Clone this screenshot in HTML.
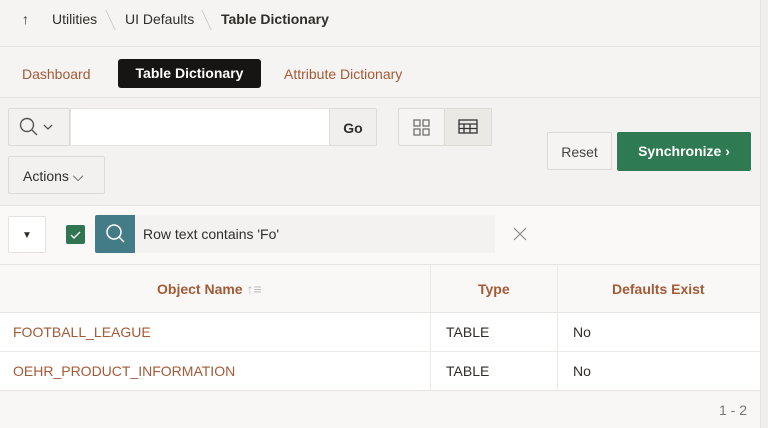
<!DOCTYPE html>
<html><head><meta charset="utf-8"><style>
*{box-sizing:border-box;margin:0;padding:0}
body{width:768px;height:428px;overflow:hidden;background:#f5f4f2;font-family:"Liberation Sans",sans-serif;position:relative;color:#312d2a}
.a{position:absolute}
.bc{font-size:14px;color:#312d2a;top:11px}
.tab{font-size:14px;color:#a35a36;top:66px}
.btn{position:absolute;border:1px solid #dddad6;background:#f1efed;border-radius:2px}
.hd{font-size:14px;font-weight:bold;color:#a35a36;top:281px}
.cell{font-size:14px;top:0}
</style></head><body>
<!-- breadcrumb -->
<div class="a" style="left:0;top:0;width:768px;height:47px;background:#f5f4f2;border-bottom:1px solid #e8e6e3"></div>
<div class="a bc" style="left:22px;font-weight:bold">↑</div>
<div class="a bc" style="left:52px">Utilities</div>
<div class="a" style="left:110px;top:9px;width:1px;height:22px;background:#ccc;transform:rotate(-25deg)"></div>
<div class="a bc" style="left:125px">UI Defaults</div>
<div class="a" style="left:206px;top:9px;width:1px;height:22px;background:#ccc;transform:rotate(-25deg)"></div>
<div class="a bc" style="left:221px;font-weight:bold">Table Dictionary</div>
<!-- tabs -->
<div class="a" style="left:0;top:97px;width:768px;height:1px;background:#e8e6e3"></div>
<div class="a tab" style="left:22px">Dashboard</div>
<div class="a" style="left:118px;top:59px;width:143px;height:29px;background:#161513;border-radius:3px;color:#fff;font-weight:bold;font-size:14px;text-align:center;line-height:29px">Table Dictionary</div>
<div class="a tab" style="left:284px">Attribute Dictionary</div>
<!-- toolbar -->
<div class="a" style="left:0;top:98px;width:760px;height:107px;background:#f3f2f0"></div>
<div class="btn" style="left:8px;top:108px;width:62px;height:38px;background:#f3f1ef"></div>
<svg class="a" style="left:18px;top:117px" width="40" height="20"><circle cx="9" cy="8" r="6.5" fill="none" stroke="#555" stroke-width="1.4"/><path d="M14 13l5 5" stroke="#555" stroke-width="1.4"/><path d="M26 8l4 4 4-4" fill="none" stroke="#555" stroke-width="1.3"/></svg>
<div class="a" style="left:70px;top:108px;width:260px;height:38px;background:#fff;border:1px solid #e4e2df"></div>
<div class="btn" style="left:329px;top:108px;width:48px;height:38px;font-weight:bold;font-size:14px;text-align:center;line-height:38px">Go</div>
<div class="btn" style="left:398px;top:108px;width:47px;height:38px;background:#f5f4f2"></div>
<svg class="a" style="left:413px;top:119px" width="18" height="18"><g fill="none" stroke="#666" stroke-width="1.2"><rect x="1" y="1" width="6" height="6"/><rect x="10" y="1" width="6" height="6"/><rect x="1" y="10" width="6" height="6"/><rect x="10" y="10" width="6" height="6"/></g></svg>
<div class="btn" style="left:444px;top:108px;width:48px;height:38px;background:#ebe9e6"></div>
<svg class="a" style="left:458px;top:119px" width="20" height="16"><g fill="none" stroke="#333" stroke-width="1.3"><rect x="1" y="1" width="18" height="13"/><path d="M1 5h18M1 9.5h18M6 5v9M12 5v9"/></g></svg>
<div class="btn" style="left:547px;top:132px;width:65px;height:38px;background:#f5f4f2;font-size:14px;text-align:center;line-height:38px;color:#444">Reset</div>
<div class="a" style="left:617px;top:132px;width:134px;height:39px;background:#2e7a52;border-radius:2px;color:#fff;font-weight:bold;font-size:14px;text-align:center;line-height:39px">Synchronize ›</div>
<div class="btn" style="left:8px;top:156px;width:97px;height:38px;font-size:14px;line-height:38px;padding-left:14px;background:#f3f1ef">Actions ⌵</div>
<!-- filter row -->
<div class="a" style="left:0;top:205px;width:760px;height:59px;background:#faf9f8;border-top:1px solid #e8e6e3"></div>
<div class="a" style="left:8px;top:216px;width:38px;height:37px;background:#fff;border:1px solid #e4e2df;border-radius:2px;font-size:10px;text-align:center;line-height:37px">▼</div>
<div class="a" style="left:66px;top:225px;width:19px;height:19px;background:#2f7552;border-radius:2px"></div>
<svg class="a" style="left:66px;top:225px" width="19" height="19"><path d="M5 10l3 3 6-6" fill="none" stroke="#fff" stroke-width="1.4"/></svg>
<div class="a" style="left:95px;top:215px;width:40px;height:38px;background:#437b86;border-radius:2px 0 0 2px"></div>
<svg class="a" style="left:104px;top:222px" width="24" height="24"><circle cx="10" cy="10" r="7" fill="none" stroke="#fff" stroke-width="1.5"/><path d="M15 15l5 5" stroke="#fff" stroke-width="1.5"/></svg>
<div class="a" style="left:135px;top:215px;width:360px;height:38px;background:#f3f2f0"></div>
<div class="a" style="left:143px;top:226px;font-size:14px">Row text contains 'Fo'</div>
<svg class="a" style="left:513px;top:227px" width="14" height="14"><path d="M1 1l12 12M13 1L1 13" stroke="#888" stroke-width="1.2"/></svg>
<!-- table header -->
<div class="a" style="left:0;top:264px;width:760px;height:49px;background:#f9f8f7;border-top:1px solid #e6e4e1;border-bottom:1px solid #e6e4e1"></div>
<div class="a" style="left:430px;top:264px;width:1px;height:127px;background:#eae8e5"></div>
<div class="a" style="left:557px;top:264px;width:1px;height:127px;background:#eae8e5"></div>
<div class="a hd" style="left:157px">Object Name <span style="color:#bbb;font-weight:normal">↑≡</span></div>
<div class="a hd" style="left:478px">Type</div>
<div class="a hd" style="left:612px">Defaults Exist</div>
<!-- rows -->
<div class="a" style="left:0;top:313px;width:760px;height:39px;background:#fff;border-bottom:1px solid #eceae7"></div>
<div class="a" style="left:0;top:352px;width:760px;height:39px;background:#fff;border-bottom:1px solid #e6e4e1"></div>
<div class="a" style="left:430px;top:313px;width:1px;height:78px;background:#eceae7"></div>
<div class="a" style="left:557px;top:313px;width:1px;height:78px;background:#eceae7"></div>
<div class="a" style="left:13px;top:324px;font-size:14px;color:#a35a36">FOOTBALL_LEAGUE</div>
<div class="a" style="left:446px;top:324px;font-size:14px">TABLE</div>
<div class="a" style="left:573px;top:324px;font-size:14px">No</div>
<div class="a" style="left:13px;top:363px;font-size:14px;color:#a35a36">OEHR_PRODUCT_INFORMATION</div>
<div class="a" style="left:446px;top:363px;font-size:14px">TABLE</div>
<div class="a" style="left:573px;top:363px;font-size:14px">No</div>
<!-- footer -->
<div class="a" style="left:0;top:391px;width:760px;height:37px;background:#f8f7f6"></div>
<div class="a" style="left:719px;top:402px;font-size:14px;color:#777">1 - 2</div>
<div class="a" style="left:760px;top:0;width:8px;height:428px;background:#f0efed;border-left:1px solid #e6e4e1"></div>
</body></html>
